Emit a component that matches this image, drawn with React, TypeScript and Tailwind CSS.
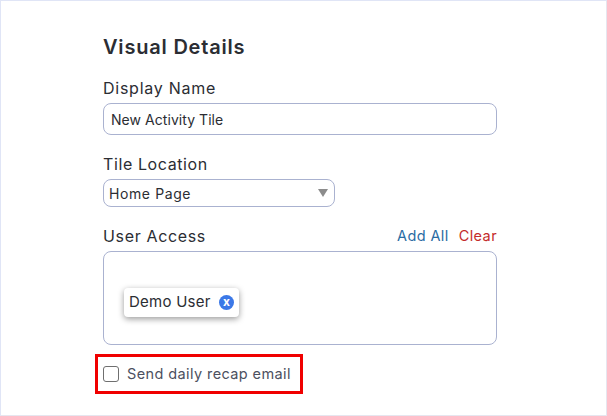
const App = () => {
  return (
    <div className="w-[607px] h-[416px] bg-white border border-[#e0e5f6] border-r-[#e6e6ef] border-b-[#e6e6ef] pl-[102px] pt-[33px] font-['Inter','Liberation_Sans',sans-serif] text-[#2b2d33] overflow-hidden">
      <div className="w-[394px] flex flex-col">
        <h1 className="text-[20px] leading-[26px] font-semibold tracking-[0.8px]">Visual Details</h1>

        <label className="mt-[18px] text-[16px] leading-[20px] tracking-[0.75px]">Display Name</label>
        <div className="mt-[5px] h-[32px] border border-[#aab2d0] rounded-lg px-[7px] flex items-center text-[14px] tracking-[0.05px]">
          New Activity Tile
        </div>

        <label className="mt-[19px] text-[16px] leading-[20px] tracking-[0.6px]">Tile Location</label>
        <div className="mt-[5px] w-[232px] h-[28px] border border-[#aab2d0] rounded-lg pl-[5px] pr-[6px] flex items-center justify-between text-[14px] tracking-[0.6px]">
          <span>Home Page</span>
          <svg width="10" height="8" viewBox="0 0 10 8">
            <path d="M0 0 H10 L5 8 Z" fill="#8c8c8c" />
          </svg>
        </div>

        <div className="mt-[19px] flex items-end justify-between">
          <label className="text-[16px] leading-[20px] tracking-[0.65px]">User Access</label>
          <div className="flex gap-[10px] text-[14.5px] leading-[20px] tracking-[0.4px]">
            <span className="text-[#2a6ca3]">Add All</span>
            <span className="text-[#c42b2b]">Clear</span>
          </div>
        </div>
        <div className="mt-[5px] h-[94px] border border-[#aab2d0] rounded-lg pl-[20px] flex items-center">
          <div className="mt-[8px] w-[115px] h-[29px] bg-white rounded shadow-[0_2px_6px_rgba(0,0,0,0.4)] pl-[5px] pr-[5px] flex items-center justify-between text-[15px] tracking-[0.25px]">
            <span>Demo User</span>
            <span className="w-[15px] h-[15px] rounded-full bg-[#3b78e7] text-white text-[12px] leading-none font-bold flex items-center justify-center">
              x
            </span>
          </div>
        </div>

        <div className="mt-[9px] -ml-[8px] w-[208px] h-[40px] border-[3px] border-[#f00000] pl-[5px] flex items-center gap-[8px]">
          <span className="w-[16px] h-[16px] border border-[#6f6f6f] rounded-[3px] bg-white shrink-0" />
          <span className="text-[14.5px] tracking-[0.4px] text-[#4c5060] whitespace-nowrap">Send daily recap email</span>
        </div>
      </div>
    </div>
  );
};

export default App;
